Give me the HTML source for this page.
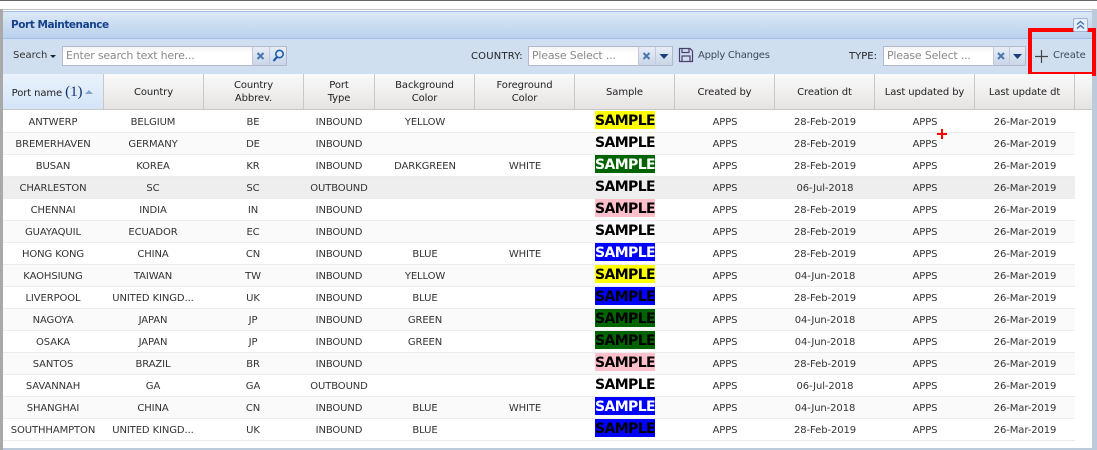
<!DOCTYPE html>
<html><head><meta charset="utf-8">
<style>
html,body{margin:0;padding:0;background:#fff}
#p{position:relative;width:1097px;height:450px;overflow:hidden;background:#fff;font-family:"DejaVu Sans","Liberation Sans",sans-serif;color:#333}
.a{position:absolute;white-space:nowrap}
.t{font-family:"DejaVu Sans",sans-serif;font-size:10px;line-height:14px}
table{position:absolute;left:3px;top:111px;width:1072px;border-collapse:separate;border-spacing:0;table-layout:fixed;font-size:10px;color:#333;letter-spacing:-.1px}
tr{height:22px}
td{height:16px;padding:4px 0 1px;border-bottom:1px solid #ececec;text-align:center;white-space:nowrap;overflow:hidden;line-height:16px;vertical-align:top}
tr:nth-child(even){background:#fafafa}
tr.s{background:#eee}
b{display:block;margin:-4px auto 0;width:60px;height:18px;font:bold 14px/20px "DejaVu Sans",sans-serif;color:#000;letter-spacing:-.6px;overflow:hidden}
.y{background:#ff0}.g{background:#006400;color:#fff}.k{background:#ffc0cb}.u{background:#00f;color:#fff}.ub{background:#00f}.gb{background:#006400}
.h{position:absolute;top:74px;height:35px;width:99px;border-right:1px solid #c8c8c8;border-bottom:1px solid #c8c8c8;background:linear-gradient(#fafafa,#e6e4e3);text-align:center;font-size:10px;line-height:13px;color:#222;display:flex;align-items:center;justify-content:center;letter-spacing:-.1px}
.o{height:34px;padding-top:1px}
.in{position:absolute;top:46px;height:18px;border:1px solid #b3b9cc;background:linear-gradient(#f4f4f4,#fff 35%);box-sizing:content-box;color:#8a8a8a;font-size:11px;line-height:18px;padding-left:3px;letter-spacing:-.2px}
.bt{position:absolute;top:46px;height:18px;width:16px;border:1px solid #b3b9cc;border-left:1px solid #c3c9d8;background:linear-gradient(#e8eef7,#c9d6e8)}
</style></head><body>
<div id="p">
<div class="a" style="left:0;top:0;width:1097px;height:1px;background:#666"></div>
<div class="a" style="left:0;top:9px;width:1097px;height:1px;background:#c0c0c0"></div>
<div class="a" style="left:0;top:9px;width:3px;height:441px;background:#a9a9a9"></div>
<div class="a" style="left:1092px;top:9px;width:5px;height:441px;background:#bccbdc"></div>
<div class="a" style="left:3px;top:448px;width:1094px;height:2px;background:#bccbdc"></div>
<div class="a" style="left:3px;top:11px;width:1089px;height:28px;box-sizing:border-box;border-top:1px solid #9fbde3;border-bottom:1px solid #9cc0ea;background:linear-gradient(#dce8f6,#b9d0ec)"></div>
<div class="a" style="left:3px;top:39px;width:1089px;height:35px;background:#d0dff0"></div>
<div class="a" style="left:11px;top:18px;font:bold 10.5px/14px 'DejaVu Sans',sans-serif;color:#15428b;letter-spacing:-.45px">Port Maintenance</div>

<div class="a t" style="left:13px;top:49px;color:#333">Search</div>
<div class="a" style="left:50px;top:55px;border:3px solid transparent;border-top:3px solid #222;border-bottom:0"></div>
<div class="in" style="left:62px;width:186px;">Enter search text here...</div>
<div class="bt" style="left:252px"><svg width="16" height="18"><path d="M4.500 6 L10.500 12 M10.500 6 L4.500 12" stroke="#4a78ae" stroke-width="2"/></svg></div>
<div class="bt" style="left:269px"><svg width="16" height="18"><circle cx="9.500" cy="7" r="3.700" fill="#dfe9f5" stroke="#1f5fa8" stroke-width="1.600"/><path d="M7 10 L3.500 14" stroke="#1f5fa8" stroke-width="2.200"/></svg></div>

<div class="a t" style="left:471px;top:50px;color:#222;letter-spacing:.2px">COUNTRY:</div>
<div class="in" style="left:528px;width:106px;">Please Select ...</div>
<div class="bt" style="left:638px"><svg width="16" height="18"><path d="M4.500 6 L10.500 12 M10.500 6 L4.500 12" stroke="#4a78ae" stroke-width="2"/></svg></div>
<div class="bt" style="left:655px"><svg width="16" height="18"><path d="M3.500 7 L8 12 L12.500 7 Z" fill="#1d3f80"/></svg></div>
<svg class="a" style="left:678px;top:47px" width="16" height="16"><path d="M1.500 1.500 H12 L14.500 4 V14.500 H1.500 Z M4 1.500 V5.500 H11 V1.500 M4 14.500 V9 H12 V14.500" fill="none" stroke="#4b3f6b" stroke-width="1.200"/></svg>
<div class="a t" style="left:698px;top:49px;color:#3a4a5e;letter-spacing:-.25px">Apply Changes</div>

<div class="a t" style="left:849px;top:50px;color:#222">TYPE:</div>
<div class="in" style="left:883px;width:106px;">Please Select ...</div>
<div class="bt" style="left:993px;width:15px"><svg width="15" height="18"><path d="M4 6 L10 12 M10 6 L4 12" stroke="#4a78ae" stroke-width="2"/></svg></div>
<div class="bt" style="left:1009px;width:15px"><svg width="15" height="18"><path d="M3 7 L7.500 12 L12 7 Z" fill="#1d3f80"/></svg></div>
<svg class="a" style="left:1034px;top:49px" width="15" height="15"><path d="M7.500 1 V14 M1 7.500 H14" stroke="#444" stroke-width="1.200"/></svg>
<div class="a t" style="left:1053px;top:49px;color:#3a4a5e;letter-spacing:-.1px">Create</div>
<div class="a" style="left:1028px;top:28px;width:68px;height:48px;box-sizing:border-box;border:4px solid #f00"></div>
<div class="a" style="left:1073px;top:18px;width:13px;height:12px;border:1px solid #9fb6d4;border-radius:2px;background:#e6eef8"><svg style="display:block" width="13" height="12"><path d="M3 5.500 L6.500 2.500 L10 5.500 M3 9.500 L6.500 6.500 L10 9.500" fill="none" stroke="#3f6fa8" stroke-width="1.300"/></svg></div>

<div class="h o" style="left:3px;width:100px;background:linear-gradient(#e9f2fc,#d4e5f8)"><span style="white-space:nowrap">Port name <span style="font:15px 'Liberation Serif',serif;color:#15306b">(1)</span></span><svg style="margin-left:3px" width="9" height="6"><path d="M0 5 L4 1 L8 5 Z" fill="#7fa4d0"/></svg></div>
<div class="h o" style="left:104px">Country</div>
<div class="h" style="left:204px">Country<br>Abbrev.</div>
<div class="h" style="left:304px;width:70px;">Port<br>Type</div>
<div class="h" style="left:375px">Background<br>Color</div>
<div class="h" style="left:475px">Foreground<br>Color</div>
<div class="h o" style="left:575px">Sample</div>
<div class="h o" style="left:675px">Created by</div>
<div class="h o" style="left:775px">Creation dt</div>
<div class="h o" style="left:875px">Last updated by</div>
<div class="h o" style="left:975px">Last update dt</div>
<div class="h" style="left:1075px;width:17px;border-right:0"></div>

<table>
<colgroup><col style="width:100px"><col style="width:100px"><col style="width:100px"><col style="width:72px"><col style="width:100px"><col style="width:100px"><col style="width:100px"><col style="width:100px"><col style="width:100px"><col style="width:100px"><col style="width:100px"></colgroup>
<tr><td>ANTWERP</td><td>BELGIUM</td><td>BE</td><td>INBOUND</td><td>YELLOW</td><td></td><td><b class="y">SAMPLE</b></td><td>APPS</td><td>28-Feb-2019</td><td>APPS</td><td>26-Mar-2019</td></tr>
<tr><td>BREMERHAVEN</td><td>GERMANY</td><td>DE</td><td>INBOUND</td><td></td><td></td><td><b>SAMPLE</b></td><td>APPS</td><td>28-Feb-2019</td><td>APPS</td><td>26-Mar-2019</td></tr>
<tr><td>BUSAN</td><td>KOREA</td><td>KR</td><td>INBOUND</td><td>DARKGREEN</td><td>WHITE</td><td><b class="g">SAMPLE</b></td><td>APPS</td><td>28-Feb-2019</td><td>APPS</td><td>26-Mar-2019</td></tr>
<tr class="s"><td>CHARLESTON</td><td>SC</td><td>SC</td><td>OUTBOUND</td><td></td><td></td><td><b>SAMPLE</b></td><td>APPS</td><td>06-Jul-2018</td><td>APPS</td><td>26-Mar-2019</td></tr>
<tr><td>CHENNAI</td><td>INDIA</td><td>IN</td><td>INBOUND</td><td></td><td></td><td><b class="k">SAMPLE</b></td><td>APPS</td><td>28-Feb-2019</td><td>APPS</td><td>26-Mar-2019</td></tr>
<tr><td>GUAYAQUIL</td><td>ECUADOR</td><td>EC</td><td>INBOUND</td><td></td><td></td><td><b>SAMPLE</b></td><td>APPS</td><td>28-Feb-2019</td><td>APPS</td><td>26-Mar-2019</td></tr>
<tr><td>HONG KONG</td><td>CHINA</td><td>CN</td><td>INBOUND</td><td>BLUE</td><td>WHITE</td><td><b class="u">SAMPLE</b></td><td>APPS</td><td>28-Feb-2019</td><td>APPS</td><td>26-Mar-2019</td></tr>
<tr><td>KAOHSIUNG</td><td>TAIWAN</td><td>TW</td><td>INBOUND</td><td>YELLOW</td><td></td><td><b class="y">SAMPLE</b></td><td>APPS</td><td>04-Jun-2018</td><td>APPS</td><td>26-Mar-2019</td></tr>
<tr><td>LIVERPOOL</td><td>UNITED KINGD...</td><td>UK</td><td>INBOUND</td><td>BLUE</td><td></td><td><b class="ub">SAMPLE</b></td><td>APPS</td><td>28-Feb-2019</td><td>APPS</td><td>26-Mar-2019</td></tr>
<tr><td>NAGOYA</td><td>JAPAN</td><td>JP</td><td>INBOUND</td><td>GREEN</td><td></td><td><b class="gb">SAMPLE</b></td><td>APPS</td><td>04-Jun-2018</td><td>APPS</td><td>26-Mar-2019</td></tr>
<tr><td>OSAKA</td><td>JAPAN</td><td>JP</td><td>INBOUND</td><td>GREEN</td><td></td><td><b class="gb">SAMPLE</b></td><td>APPS</td><td>04-Jun-2018</td><td>APPS</td><td>26-Mar-2019</td></tr>
<tr><td>SANTOS</td><td>BRAZIL</td><td>BR</td><td>INBOUND</td><td></td><td></td><td><b class="k">SAMPLE</b></td><td>APPS</td><td>28-Feb-2019</td><td>APPS</td><td>26-Mar-2019</td></tr>
<tr><td>SAVANNAH</td><td>GA</td><td>GA</td><td>OUTBOUND</td><td></td><td></td><td><b>SAMPLE</b></td><td>APPS</td><td>06-Jul-2018</td><td>APPS</td><td>26-Mar-2019</td></tr>
<tr><td>SHANGHAI</td><td>CHINA</td><td>CN</td><td>INBOUND</td><td>BLUE</td><td>WHITE</td><td><b class="u">SAMPLE</b></td><td>APPS</td><td>04-Jun-2018</td><td>APPS</td><td>26-Mar-2019</td></tr>
<tr><td>SOUTHHAMPTON</td><td>UNITED KINGD...</td><td>UK</td><td>INBOUND</td><td>BLUE</td><td></td><td><b class="ub">SAMPLE</b></td><td>APPS</td><td>28-Feb-2019</td><td>APPS</td><td>26-Mar-2019</td></tr>
</table>
<div class="a" style="left:937px;top:133px;width:10px;height:2px;background:#f00"></div>
<div class="a" style="left:941px;top:129px;width:2px;height:10px;background:#f00"></div>
</div>
</body></html>
